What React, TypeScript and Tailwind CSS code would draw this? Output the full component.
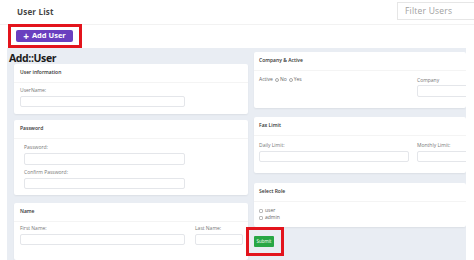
export default function App() {
  return (
    <div className="w-[474px] h-[260px] overflow-hidden bg-white text-[#555]" style={{ fontFamily: '"Open Sans", "Noto Sans", sans-serif' }}>
      {/* Top bar */}
      <div className="h-[25px] flex items-start border-b border-[#f2f2f2]">
        <div className="pl-[17px] pt-[6px] text-[8px] font-bold tracking-wide text-[#444]">User List</div>
        <div className="ml-auto mt-[2px] w-[77px] h-[18px] border border-[#e6e6e6] border-r-0 flex items-center pl-[7px] text-[8.5px] text-[#a0a0a0] tracking-wide">
          Filter Users
        </div>
      </div>

      {/* Add user */}
      <div className="pl-[8px] -mt-[1px]">
        <div className="w-[74px] h-[24px] border-[3px] border-[#e3141c] flex items-center pl-[5px]">
          <button className="w-[57px] h-[12px] rounded-[2px] bg-[#6a3fbf] text-white text-[7.5px] font-bold flex items-center justify-center gap-[3px]">
            <span className="text-[10px] leading-none -mt-[1px]">+</span>
            <span>Add User</span>
          </button>
        </div>
      </div>

      {/* Form area */}
      <div className="ml-[7px] w-[459px] h-[212px] bg-[#e9edf3] flex gap-[6px] pl-[7px] pt-[4px] overflow-hidden">
        {/* Left column */}
        <div className="w-[234px] shrink-0 flex flex-col">
          <div className="-ml-[5px] h-[12px] text-[10.5px] font-bold text-[#1a1a1a] leading-[12px] tracking-[-0.4px]">Add::User</div>

          <Card title="User information" className="h-[52px]">
            <div className="px-[6px] pt-[4px]">
              <Label>UserName:</Label>
              <Input className="w-[165px] mt-[3px]" />
            </div>
          </Card>

          <Card title="Password" className="h-[78px] mt-[6px]">
            <div className="px-[10px] pt-[5px]">
              <Label>Password:</Label>
              <Input className="w-[161px] mt-[3px] h-[12px]" />
              <div className="mt-[4px]">
                <Label>Confirm Password:</Label>
              </div>
              <Input className="w-[161px] mt-[3px]" />
            </div>
          </Card>

          <Card title="Name" className="h-[60px] mt-[8px]">
            <div className="px-[6px] pt-[3px] flex gap-[10px]">
              <div className="shrink-0">
                <Label>First Name:</Label>
                <Input className="w-[165px] mt-[3px]" />
              </div>
              <div className="shrink-0">
                <Label>Last Name:</Label>
                <Input className="w-[48px] mt-[3px]" />
              </div>
            </div>
          </Card>
        </div>

        {/* Right column */}
        <div className="w-[212px] shrink-0 flex flex-col">
          <Card title="Company & Active" className="h-[56px]" pad="px-[5px]">
            <div className="px-[5px] pt-[6px] flex">
              <div className="shrink-0 flex items-center gap-[1px] text-[5px] text-[#666] h-[6px] w-[158px]">
                Active
                <Radio /> No
                <Radio /> Yes
              </div>
              <div className="shrink-0">
                <Label>Company</Label>
                <Input className="w-[60px] mt-[2px] h-[12px]" />
              </div>
            </div>
          </Card>

          <Card title="Fax Limit" className="h-[56px] mt-[9px]" pad="px-[5px]">
            <div className="px-[5px] pt-[6px] flex gap-[8px]">
              <div className="shrink-0">
                <Label>Daily Limit:</Label>
                <Input className="w-[150px] mt-[3px] h-[11px]" />
              </div>
              <div className="shrink-0">
                <Label>Monthly Limit:</Label>
                <Input className="w-[60px] mt-[3px] h-[11px]" />
              </div>
            </div>
          </Card>

          <Card title="Select Role" className="h-[44px] mt-[10px]" pad="px-[5px]">
            <div className="px-[5px] pt-[5px] text-[5px] text-[#666] leading-[7px]">
              <div className="flex items-center gap-[2px]">
                <Box /> user
              </div>
              <div className="flex items-center gap-[2px]">
                <Box /> admin
              </div>
            </div>
          </Card>

          <div className="-ml-[8px]">
            <div className="w-[38px] h-[29px] border-[3px] border-[#e3141c] flex items-center pl-[5px]">
              <button className="w-[20px] h-[11px] rounded-[1px] bg-[#28a745] text-white text-[4.5px] flex items-center justify-center">
                Submit
              </button>
            </div>
          </div>
        </div>
      </div>
    </div>
  );
}

function Card({ title, className, pad, children }: { title: string; className?: string; pad?: string; children: React.ReactNode }) {
  return (
    <div className={`bg-white rounded-[2px] shadow-[0_1px_2px_rgba(0,0,0,0.06)] ${className ?? ''}`}>
      <div className={`h-[19px] flex items-center border-b border-[#f4f4f4] text-[5px] font-semibold text-[#333] ${pad ?? 'px-[6px]'}`}>
        {title}
      </div>
      {children}
    </div>
  );
}

function Label({ children }: { children: React.ReactNode }) {
  return <div className="text-[5px] leading-[6px] text-[#777]">{children}</div>;
}

function Input({ className }: { className?: string }) {
  return <div className={`h-[11px] bg-white border border-[#e4e6ea] rounded-[2px] ${className ?? ''}`} />;
}

function Radio() {
  return <span className="inline-block w-[4px] h-[4px] rounded-full border border-[#aaa] ml-[1px]" />;
}

function Box() {
  return <span className="inline-block w-[4px] h-[4px] border border-[#bbb] rounded-[1px]" />;
}
